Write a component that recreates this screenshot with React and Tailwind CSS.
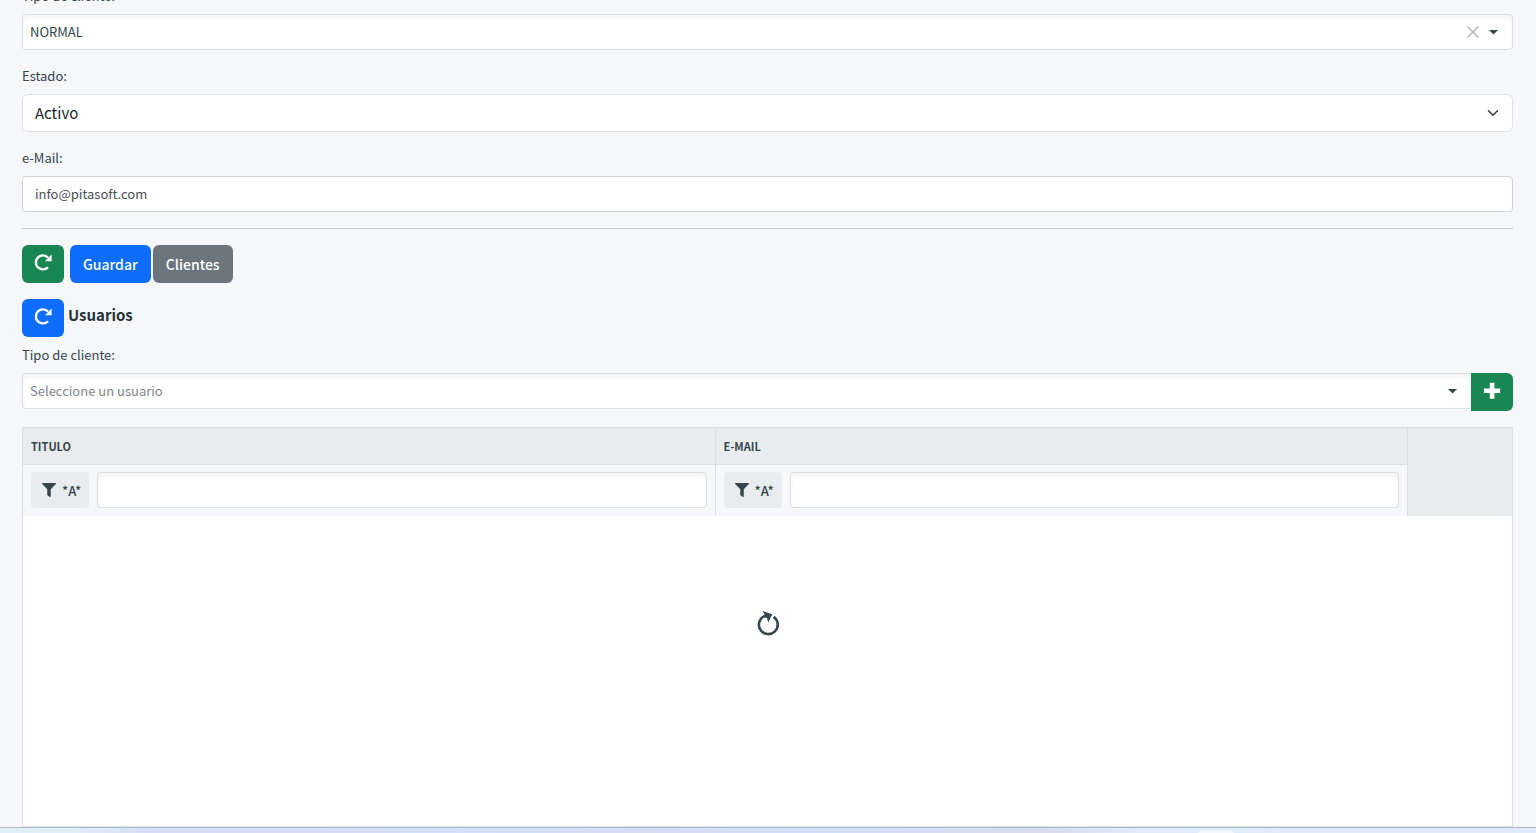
import React from 'react';
import { FaFilter } from 'react-icons/fa';

/* ─── Icons ───────────────────────────────────────────────────────────── */
const Caret = () => (
  <svg width="9" height="5" viewBox="0 0 9 5" className="pointer-events-none shrink-0 fill-[#36454c]">
    <path d="M0 0h9L4.5 4.6z" />
  </svg>
);

const Chevron = () => (
  <svg width="12" height="12" viewBox="0 0 16 16" fill="none" stroke="#343a40" strokeWidth="2" strokeLinecap="round" strokeLinejoin="round">
    <path d="m2 5 6 6 6-6" />
  </svg>
);

const Cross = () => (
  <svg width="12" height="12" viewBox="0 0 12 12" fill="none" stroke="#b1b8bb" strokeWidth="1.5">
    <path d="M.5.5l11 11M11.5.5l-11 11" />
  </svg>
);

const ReloadIcon = () => (
  <svg width="18" height="18" viewBox="0 0 18 18">
    <path d="M14 13.2A7 7 0 1 1 14 3.6" fill="none" stroke="currentColor" strokeWidth="2.4" />
    <path d="M17.6.6v6.6H11z" fill="currentColor" />
  </svg>
);

const PlusIcon = () => (
  <svg width="18" height="18" viewBox="0 0 18 18" fill="currentColor">
    <path d="M6.8.8h4.6v5.6h5.7V11h-5.7v5.8H6.8V11H1V6.4h5.8z" />
  </svg>
);

const LoadingIcon = () => (
  <svg width="24" height="26" viewBox="0 0 24 26">
    <path d="M17.6 6.9A9.4 9.4 0 1 1 9 5.9" fill="none" stroke="#36474f" strokeWidth="2.6" />
    <path d="M6.5 1 16.3 4.3 12.2 12.5 11 8 7 7.2 8.6 4.8z" fill="#36474f" />
  </svg>
);

/* ─── Form parts ──────────────────────────────────────────────────────── */
const Label = ({ htmlFor, children }) => (
  <label htmlFor={htmlFor} className="mb-2 block text-[13px] leading-5">
    {children}
  </label>
);

const IconButton = ({ label, className = '', children }) => (
  <button
    type="button"
    aria-label={label}
    className={`flex h-[38px] w-[42px] shrink-0 items-center justify-center pb-0.5 text-white ${className}`}
  >
    {children}
  </button>
);

/* ─── Users grid ──────────────────────────────────────────────────────── */
const columns = [
  { key: 'titulo', title: 'TITULO' },
  { key: 'email', title: 'E-MAIL' },
];

const UsersGrid = () => (
  <div className="relative mt-4 flex-1 border border-[#dadfe2] bg-white">
    <table className="w-full table-fixed border-collapse">
      <colgroup>
        <col />
        <col />
        <col className="w-[105px]" />
      </colgroup>
      <thead>
        <tr className="h-9 bg-[#e8ecef]">
          {columns.map((col) => (
            <th key={col.key} className="border-r border-b border-[#dadfe2] px-2 text-left text-[11px] leading-4 font-bold">
              {col.title}
            </th>
          ))}
          <th rowSpan={2} aria-label="Acciones" />
        </tr>
        <tr className="h-[52px] bg-[#f5f7fa]">
          {columns.map((col) => (
            <td key={col.key} className="border-r border-[#dadfe2] px-2">
              <div className="flex gap-2">
                <button
                  type="button"
                  className="flex h-9 w-[58px] shrink-0 items-center gap-1.5 rounded bg-[#e8ecef] pl-[11px] text-[13px] font-medium"
                >
                  <FaFilter size={14} />
                  *A*
                </button>
                <input
                  type="text"
                  aria-label={`Filtrar ${col.title}`}
                  className="h-9 min-w-0 flex-1 rounded border border-[#dadfe2] bg-white px-2 text-[13px] inset-shadow-[0_4px_4px_#f5f5f5]"
                />
              </div>
            </td>
          ))}
        </tr>
      </thead>
    </table>
    <div role="status" aria-label="Cargando" className="pointer-events-none absolute inset-0 flex items-center justify-center pb-2">
      <LoadingIcon />
    </div>
  </div>
);

/* ─── Page ────────────────────────────────────────────────────────────── */
const App = () => (
  <div className="flex h-screen flex-col overflow-hidden bg-[#f5f7fb] font-['Noto_Sans_CJK_SC','Noto_Sans',sans-serif] text-[#36454c]">
    <main className="-mt-3.5 flex flex-1 flex-col pr-[23px] pl-[22px]">
      <Label htmlFor="tipo">Tipo de cliente:</Label>
      <div className="flex h-9 items-center rounded border border-[#dadfe2] bg-white pr-3.5 inset-shadow-[0_4px_4px_#f5f5f5]">
        <select id="tipo" defaultValue="NORMAL" className="h-full flex-1 appearance-none pl-[7px] text-[13px] outline-none">
          <option>NORMAL</option>
        </select>
        <button type="button" aria-label="Limpiar" className="mr-2.5">
          <Cross />
        </button>
        <Caret />
      </div>

      <div className="mt-4">
        <Label htmlFor="estado">Estado:</Label>
        <div className="relative">
          <select
            id="estado"
            defaultValue="Activo"
            className="h-[38px] w-full appearance-none rounded-md border border-[#dee2e6] bg-white px-3 text-[15px] text-[#212529]"
          >
            <option>Activo</option>
            <option>Inactivo</option>
          </select>
          <span className="pointer-events-none absolute inset-y-0 right-3.5 flex items-center">
            <Chevron />
          </span>
        </div>
      </div>

      <div className="mt-4">
        <Label htmlFor="email">e-Mail:</Label>
        <input
          id="email"
          type="email"
          defaultValue="info@pitasoft.com"
          className="block h-9 w-full rounded border border-[#ced4da] bg-white px-3 pb-0.5 text-[13px] text-[#495057]"
        />
      </div>

      <hr className="my-4 border-[#c5c9cf]" />

      <div className="flex gap-0.5 text-[14px] font-medium text-white">
        <IconButton label="Recargar" className="mr-1 rounded-md bg-[#198754]">
          <ReloadIcon />
        </IconButton>
        <button type="button" className="h-[38px] rounded-md bg-[#0d6efd] px-[13px]">
          Guardar
        </button>
        <button type="button" className="h-[38px] rounded-md bg-[#6c757d] px-[13px]">
          Clientes
        </button>
      </div>

      <div className="mt-4 mb-2 flex gap-1">
        <IconButton label="Recargar usuarios" className="rounded-md bg-[#0d6efd]">
          <ReloadIcon />
        </IconButton>
        <h2 className="pt-1 text-[15px] leading-6 font-bold text-[#263238]">Usuarios</h2>
      </div>

      <Label htmlFor="usuario">Tipo de cliente:</Label>
      <div className="flex items-start">
        <div className="flex h-9 flex-1 items-center rounded-l border border-r-0 border-[#dadfe2] bg-white pr-3.5 inset-shadow-[0_4px_4px_#f5f5f5]">
          <input
            id="usuario"
            type="text"
            placeholder="Seleccione un usuario"
            className="h-full flex-1 pb-0.5 pl-[7px] text-[13px] outline-none placeholder:text-[#7d868a]"
          />
          <Caret />
        </div>
        <IconButton label="Agregar usuario" className="rounded-r-md bg-[#198754]">
          <PlusIcon />
        </IconButton>
      </div>

      <UsersGrid />
    </main>

    <footer className="h-1.5 shrink-0 border-t border-[#adb9c5] bg-[linear-gradient(90deg,#e0eef7_5%,#d5dcf5_10%,#d8dcf3_20%,#d3e1fc_30%,#d5dcf0_42%,#d3dffb_52%,#d8dcea_68%,#e0edf8_74%,#dfebf8)] pl-[78%]">
      <div className="mt-[3px] h-0.5 w-9 rounded-t bg-[#f3f8fc]" />
    </footer>
  </div>
);

export default App;
